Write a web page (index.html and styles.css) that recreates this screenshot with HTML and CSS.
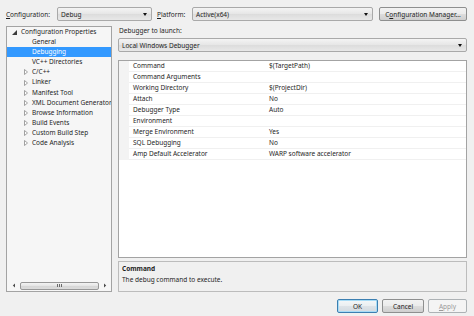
FILE: index.html
```html
<!DOCTYPE html>
<html>
<head>
<meta charset="utf-8">
<link rel="stylesheet" href="styles.css">
</head>
<body>
<div class="dialog">
  <div class="top">
    <span class="lbl lbl-config"><u>C</u>onfiguration:</span>
    <div class="combo combo-config"><span>Debug</span><i class="arr"></i></div>
    <span class="lbl lbl-plat"><u>P</u>latform:</span>
    <div class="combo combo-plat"><span>Active(x64)</span><i class="arr"></i></div>
    <div class="btn btn-mgr">C<u>o</u>nfiguration Manager...</div>
  </div>
  <div class="main">
    <div class="tree">
      <div class="tree-list">
        <div class="ti lvl0"><svg class="exp" width="5" height="5" viewBox="0 0 5 5"><path d="M5 0 L5 5 L0 5 Z" fill="#3c3c3c"/></svg><span>Configuration Properties</span></div>
        <div class="ti lvl1 leaf"><span>General</span></div>
        <div class="ti lvl1 leaf sel"><span>Debugging</span></div>
        <div class="ti lvl1 leaf"><span>VC++ Directories</span></div>
        <div class="ti lvl1"><svg class="col" width="4" height="6" viewBox="0 0 4 6"><path d="M0.5 0.5 L3.5 3 L0.5 5.5 Z" fill="#fff" stroke="#8c8c8c" stroke-width="0.8"/></svg><span>C/C++</span></div>
        <div class="ti lvl1"><svg class="col" width="4" height="6" viewBox="0 0 4 6"><path d="M0.5 0.5 L3.5 3 L0.5 5.5 Z" fill="#fff" stroke="#8c8c8c" stroke-width="0.8"/></svg><span>Linker</span></div>
        <div class="ti lvl1"><svg class="col" width="4" height="6" viewBox="0 0 4 6"><path d="M0.5 0.5 L3.5 3 L0.5 5.5 Z" fill="#fff" stroke="#8c8c8c" stroke-width="0.8"/></svg><span>Manifest Tool</span></div>
        <div class="ti lvl1"><svg class="col" width="4" height="6" viewBox="0 0 4 6"><path d="M0.5 0.5 L3.5 3 L0.5 5.5 Z" fill="#fff" stroke="#8c8c8c" stroke-width="0.8"/></svg><span>XML Document Generator</span></div>
        <div class="ti lvl1"><svg class="col" width="4" height="6" viewBox="0 0 4 6"><path d="M0.5 0.5 L3.5 3 L0.5 5.5 Z" fill="#fff" stroke="#8c8c8c" stroke-width="0.8"/></svg><span>Browse Information</span></div>
        <div class="ti lvl1"><svg class="col" width="4" height="6" viewBox="0 0 4 6"><path d="M0.5 0.5 L3.5 3 L0.5 5.5 Z" fill="#fff" stroke="#8c8c8c" stroke-width="0.8"/></svg><span>Build Events</span></div>
        <div class="ti lvl1"><svg class="col" width="4" height="6" viewBox="0 0 4 6"><path d="M0.5 0.5 L3.5 3 L0.5 5.5 Z" fill="#fff" stroke="#8c8c8c" stroke-width="0.8"/></svg><span>Custom Build Step</span></div>
        <div class="ti lvl1"><svg class="col" width="4" height="6" viewBox="0 0 4 6"><path d="M0.5 0.5 L3.5 3 L0.5 5.5 Z" fill="#fff" stroke="#8c8c8c" stroke-width="0.8"/></svg><span>Code Analysis</span></div>
      </div>
      <div class="hscroll">
        <svg class="sarr" width="4" height="5" viewBox="0 0 4 5"><path d="M3 0.5 L0.8 2.5 L3 4.5 Z" fill="#4a4a4a"/></svg>
        <div class="thumb"><span class="grip"></span></div>
        <svg class="sarr" width="4" height="5" viewBox="0 0 4 5"><path d="M1 0.5 L3.2 2.5 L1 4.5 Z" fill="#4a4a4a"/></svg>
      </div>
    </div>
    <div class="right">
      <div class="launch-lbl">Debugger to launch:</div>
      <div class="combo combo-launch"><span>Local Windows Debugger</span><i class="arr"></i></div>
      <div class="grid">
        <div class="rows">
          <div class="m"></div><div class="n">Command</div><div class="v">$(TargetPath)</div>
          <div class="m"></div><div class="n">Command Arguments</div><div class="v"></div>
          <div class="m"></div><div class="n">Working Directory</div><div class="v">$(ProjectDir)</div>
          <div class="m"></div><div class="n">Attach</div><div class="v">No</div>
          <div class="m"></div><div class="n">Debugger Type</div><div class="v">Auto</div>
          <div class="m"></div><div class="n">Environment</div><div class="v"></div>
          <div class="m"></div><div class="n">Merge Environment</div><div class="v">Yes</div>
          <div class="m"></div><div class="n">SQL Debugging</div><div class="v">No</div>
          <div class="m"></div><div class="n">Amp Default Accelerator</div><div class="v">WARP software accelerator</div>
        </div>
      </div>
      <div class="desc">
        <div class="desc-title">Command</div>
        <div class="desc-text">The debug command to execute.</div>
      </div>
    </div>
  </div>
  <div class="bottom">
    <div class="btn btn-ok">OK</div>
    <div class="btn btn-cancel">Cancel</div>
    <div class="btn btn-apply"><u>A</u>pply</div>
  </div>
</div>
</body>
</html>
```

FILE: styles.css
```css
html, body {
  margin: 0;
  padding: 0;
}
body {
  background: #f0f0f0;
  font-family: "Segoe UI", "Noto Sans", "Liberation Sans", sans-serif;
  font-size: 6.5px;
  color: #1e1e1e;
}
.dialog {
  width: 474px;
  height: 316px;
  overflow: hidden;
}
u { text-decoration: underline; text-underline-offset: 1px; }

.top {
  display: flex;
  align-items: center;
  height: 14px;
  padding: 7px 0 0 6px;
}
.lbl-config { width: 51px; }
.lbl-plat { width: 35px; margin-left: 5px; }
.combo {
  display: flex;
  align-items: center;
  box-sizing: border-box;
  height: 14px;
  border: 1px solid #a9a9a9;
  border-radius: 2px;
  background: linear-gradient(#f4f4f4, #e6e6e6 50%, #dcdcdc 51%, #e8e8e8);
  padding: 0 4px 0 3px;
}
.combo span { flex: 1; white-space: nowrap; }
.arr {
  width: 0;
  height: 0;
  border-left: 2.5px solid transparent;
  border-right: 2.5px solid transparent;
  border-top: 3px solid #111;
}
.combo-config { width: 95px; }
.combo-plat { width: 181px; }
.btn {
  box-sizing: border-box;
  display: flex;
  align-items: center;
  justify-content: center;
  height: 14px;
  border: 1px solid #8e8f8f;
  border-radius: 2px;
  background: linear-gradient(#f2f2f2, #ebebeb 50%, #dddddd 51%, #cfcfcf);
  white-space: nowrap;
}
.btn-mgr { width: 88px; margin-left: 6px; }

.main {
  display: flex;
  height: 266px;
  margin-top: 5px;
  padding-left: 6px;
}
.tree {
  box-sizing: border-box;
  width: 106px;
  border: 1px solid #a3a3a3;
  background: #f6f6f6;
  display: flex;
  flex-direction: column;
  overflow: hidden;
}
.tree-list { flex: 1; }
.ti {
  height: 10.1px;
  line-height: 10.1px;
  display: flex;
  align-items: center;
  white-space: nowrap;
}
.ti svg { flex-shrink: 0; }
.ti span { flex-shrink: 0; }
.lvl0 { padding-left: 5px; }
.lvl0 .exp { margin-right: 4px; }
.lvl1 { padding-left: 17px; }
.lvl1 .col { margin-right: 4px; }
.leaf { padding-left: 25px; }
.sel { background: #3399ff; color: #fff; }
.hscroll {
  height: 9px;
  margin-bottom: 1px;
  display: flex;
  align-items: center;
  padding: 0 4px 0 5px;
  gap: 2px;
}
.thumb {
  flex: 1;
  height: 8px;
  box-sizing: border-box;
  border: 1px solid #979797;
  border-radius: 2px;
  background: linear-gradient(#f3f3f3, #e4e4e4 50%, #d6d6d6 51%, #dcdcdc);
  display: flex;
  align-items: center;
  justify-content: center;
  margin: 0 2px;
}
.grip {
  width: 5px;
  height: 3px;
  background: repeating-linear-gradient(90deg, #6a6a6a 0 1px, transparent 1px 2px);
}

.right {
  width: 349px;
  margin-left: 6px;
  display: flex;
  flex-direction: column;
}
.launch-lbl {
  height: 8px;
  line-height: 8px;
  padding-left: 1px;
  margin-top: 1px;
}
.combo-launch { width: 349px; margin-top: 3px; }
.grid {
  box-sizing: border-box;
  height: 198px;
  margin-top: 8px;
  border: 1px solid #a3a3a3;
  background: #fff;
}
.rows {
  display: grid;
  grid-template-columns: 10px 137px 1fr;
}
.rows > div {
  box-sizing: border-box;
  height: 11px;
  line-height: 10px;
  border-bottom: 1px solid #f0f0f0;
  white-space: nowrap;
}
.m { background: #f3f3f3; border-bottom-color: #f3f3f3 !important; }
.n { padding-left: 4px; }
.v { padding-left: 3px; }
.desc {
  box-sizing: border-box;
  height: 31px;
  margin-top: 3px;
  border: 1px solid #bcbcbc;
  background: #f0f0f0;
  padding: 2px 0 0 3px;
}
.desc-title { font-weight: bold; line-height: 10px; }
.desc-text { line-height: 11px; }

.bottom {
  display: flex;
  justify-content: flex-end;
  padding: 7px 7px 0 0;
  gap: 4px;
}
.btn-ok {
  width: 41px;
  border-color: #3c7fb1;
  box-shadow: inset 0 0 0 1px #a8dcf6;
  background: linear-gradient(#f4f7f9, #eaeef1 50%, #dde3e8 51%, #d3dbe1);
}
.btn-cancel { width: 42px; }
.btn-apply {
  width: 39px;
  border-color: #adb2b5;
  background: #f4f4f4;
  color: #9a9a9a;
}
```
